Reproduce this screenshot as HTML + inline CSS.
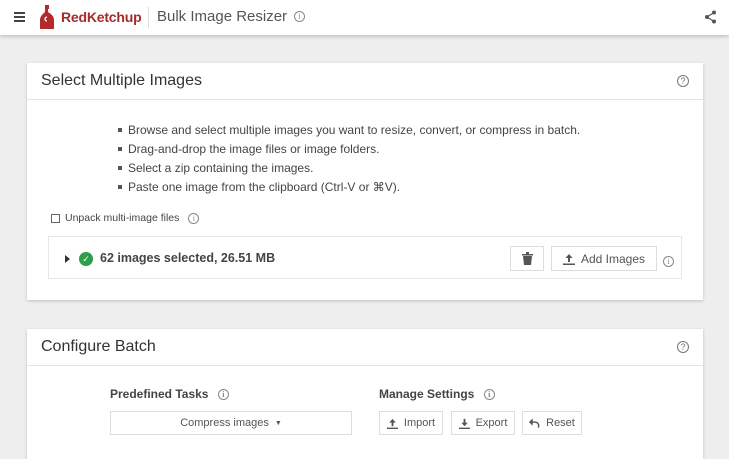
<!DOCTYPE html>
<html><head><meta charset="utf-8"><style>
*{box-sizing:border-box;margin:0;padding:0}
body{width:729px;height:450px;overflow:hidden;background:#eeeeee;font-family:"Liberation Sans",Arial,sans-serif;color:#444;position:relative}
.top{position:absolute;left:0;top:0;width:729px;height:35px;background:#fff;box-shadow:0 1px 4px rgba(0,0,0,.25)}
.abs{position:absolute}
.card{position:absolute;left:27px;width:676px;background:#fff;box-shadow:0 1px 3px rgba(0,0,0,.2)}
.hdr{height:37px;border-bottom:1px solid #e3e3e3;padding:9px 14px;font-size:16px;color:#333;position:relative}
.q{position:absolute;right:14px;top:12px;width:12px;height:12px;border:1px solid #777;border-radius:50%;font-size:9px;text-align:center;line-height:10px;color:#777}
.i{display:inline-block;width:11px;height:11px;border:1px solid #888;border-radius:50%;font-size:8px;text-align:center;line-height:9px;color:#888;vertical-align:middle;font-family:"Liberation Serif",serif}
.btn{position:absolute;border:1px solid #ddd;background:#fff;font-size:11px;color:#555;display:flex;align-items:center;justify-content:center;gap:6px}
ul{list-style:none}
li{font-size:12px;color:#444;line-height:19px;white-space:nowrap}
li:before{content:"";display:inline-block;width:4px;height:4px;background:#555;margin-right:6px;vertical-align:2px}
</style></head><body>
<div class="top">
 <div class="abs" style="left:14px;top:12px;width:11px;height:2px;background:#444;box-shadow:0 4px 0 #444,0 8px 0 #444"></div>
 <svg class="abs" style="left:40px;top:5px" width="14" height="24" viewBox="0 0 14 24"><path d="M5 0h4v4h-1v3c3 2 6 4 6 8v9H0v-9c0-4 3-6 5-8V4H5z" fill="#b22a2a"/><path d="M7 12a2 2 0 1 0 0 4" fill="none" stroke="#fff" stroke-width="1.3"/></svg>
 <div class="abs" style="left:61px;top:9px;font-size:14px;font-weight:bold;color:#a52b2b;letter-spacing:-0.2px">RedKetchup</div>
 <div class="abs" style="left:148px;top:7px;width:1px;height:21px;background:#ddd"></div>
 <div class="abs" style="left:157px;top:8px;font-size:15px;color:#555">Bulk Image Resizer</div>
 <div class="abs" style="left:294px;top:11px"><span class="i" style="vertical-align:top">i</span></div>
 <svg class="abs" style="left:704px;top:10px" width="13" height="14" viewBox="0 0 13 14"><circle cx="10" cy="2.5" r="2" fill="#555"/><circle cx="10" cy="11.5" r="2" fill="#555"/><circle cx="3" cy="7" r="2" fill="#555"/><path d="M10 2.5L3 7l7 4.5" stroke="#555" stroke-width="1.2" fill="none"/></svg>
</div>

<div class="card" style="top:63px;height:237px">
 <div class="hdr">Select Multiple Images<span class="q">?</span></div>
 <ul class="abs" style="left:91px;top:58px">
  <li>Browse and select multiple images you want to resize, convert, or compress in batch.</li>
  <li>Drag-and-drop the image files or image folders.</li>
  <li>Select a zip containing the images.</li>
  <li>Paste one image from the clipboard (Ctrl-V or ⌘V).</li>
 </ul>
 <div class="abs" style="left:24px;top:149px;font-size:10.5px;color:#444;display:flex;align-items:center;gap:5px"><span style="width:9px;height:9px;border:1px solid #666;display:inline-block"></span>Unpack multi-image files <span class="i" style="margin-left:4px">i</span></div>
 <div class="abs" style="left:21px;top:173px;width:634px;height:43px;border:1px solid #e6e6e6">
  <div class="abs" style="left:16px;top:18px;border-left:5px solid #333;border-top:4px solid transparent;border-bottom:4px solid transparent"></div>
  <div class="abs" style="left:30px;top:15px;width:14px;height:14px;border-radius:50%;background:#2e9e4a;color:#fff;font-size:9px;text-align:center;line-height:14px">✓</div>
  <div class="abs" style="left:51px;top:14px;font-size:12.5px;font-weight:bold;color:#444">62 images selected, 26.51 MB</div>
  <div class="btn" style="left:461px;top:9px;width:34px;height:25px"><svg width="11" height="13" viewBox="0 0 11 13"><path d="M0 2h11v1.5H0zM4 0h3v2H4zM1 4h9l-1 9H2z" fill="#555"/></svg></div>
  <div class="btn" style="left:502px;top:9px;width:106px;height:25px;font-size:12px">
   <svg width="12" height="12" viewBox="0 0 12 12"><path d="M6 1L2.5 5H5v4h2V5h2.5zM0 10.5h12V12H0z" fill="#555"/></svg>Add Images</div>
  <div class="abs" style="left:614px;top:16px"><span class="i">i</span></div>
 </div>
</div>

<div class="card" style="top:329px;height:130px">
 <div class="hdr">Configure Batch<span class="q">?</span></div>
 <div class="abs" style="left:83px;top:58px;font-size:12px;font-weight:bold;color:#444">Predefined Tasks <span class="i" style="margin-left:6px">i</span></div>
 <div class="btn" style="left:83px;top:82px;width:242px;height:24px">Compress images <span style="font-size:7px">▼</span></div>
 <div class="abs" style="left:352px;top:58px;font-size:12px;font-weight:bold;color:#444">Manage Settings <span class="i" style="margin-left:6px">i</span></div>
 <div class="btn" style="left:352px;top:82px;width:64px;height:24px"><svg width="11" height="11" viewBox="0 0 12 12"><path d="M6 1L2.5 5H5v4h2V5h2.5zM0 10.5h12V12H0z" fill="#555"/></svg>Import</div>
 <div class="btn" style="left:424px;top:82px;width:64px;height:24px"><svg width="11" height="11" viewBox="0 0 12 12"><path d="M6 9L2.5 5H5V1h2v4h2.5zM0 10.5h12V12H0z" fill="#555"/></svg>Export</div>
 <div class="btn" style="left:495px;top:82px;width:60px;height:24px"><svg width="11" height="10" viewBox="0 0 12 10"><path d="M3 4h4a4 4 0 0 1 3 6" stroke="#555" stroke-width="1.5" fill="none"/><path d="M0 4l4-4v8z" fill="#555"/></svg>Reset</div>
</div>
</body></html>
